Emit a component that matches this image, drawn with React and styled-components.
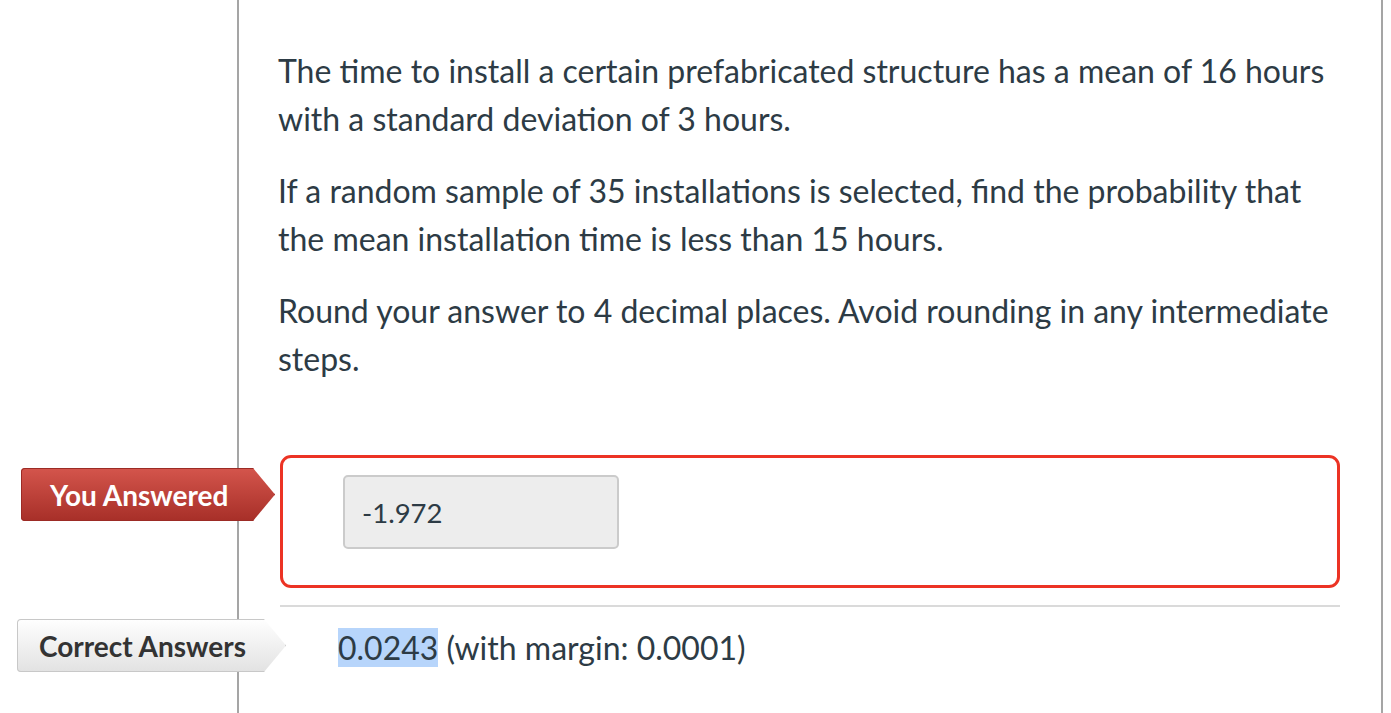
import React from "react";
import styled, { createGlobalStyle } from "styled-components";

const GlobalStyle = createGlobalStyle`
  html, body {
    margin: 0;
    padding: 0;
    background: #fff;
  }
  body {
    font-family: Lato, "Open Sans", "Liberation Sans", sans-serif;
    color: #2d3b45;
  }
`;

const Question = styled.div`
  margin-left: 237px;
  width: 1146px;
  min-height: 713px;
  border-left: 2px solid #a5a5a5;
  border-right: 2px solid #a5a5a5;
  padding: 47px 41px 0 39px;
  box-sizing: border-box;
`;

const Text = styled.div`
  font-size: 32px;
  line-height: 48px;

  p {
    margin: 0 0 24px 0;
  }
`;

const AnswerRow = styled.div`
  position: relative;
`;

const Answered = styled(AnswerRow)`
  margin: 72px 0 0 2px;
  height: 133px;
  border: 3px solid #ec3324;
  border-radius: 11px;
  box-sizing: border-box;
  padding: 17px 0 0 60px;
`;

const Label = styled.div`
  position: absolute;
  left: ${p => p.left}px;
  top: ${p => p.top}px;
  height: 53px;
  width: ${p => p.width}px;
  display: flex;
  align-items: center;
  box-sizing: border-box;
  padding-left: ${p => p.pad}px;
  font-size: 28px;
  font-weight: 700;
  border-radius: 4px 0 0 4px;
  clip-path: polygon(0 0, calc(100% - 22px) 0, 100% 50%, calc(100% - 22px) 100%, 0 100%);
  background: ${p => p.wrong
    ? "linear-gradient(#d4554c, #a72f28)"
    : "linear-gradient(#ffffff, #e2e2e2)"};
  color: ${p => p.wrong ? "#fff" : "#333"};
  box-shadow: inset 0 0 0 1px ${p => p.wrong ? "#9c2b25" : "#c8c8c8"};
`;

const InputBox = styled.div`
  width: 276px;
  height: 74px;
  background: #ededed;
  border: 2px solid #cbcbcb;
  border-radius: 5px;
  box-sizing: border-box;
  display: flex;
  align-items: center;
  padding-left: 17px;
  font-size: 27.5px;
  color: #2d3b45;
`;

const Divider = styled.div`
  height: 2px;
  background: #dadada;
  margin: 17px 0 0 2px;
`;

const Correct = styled(AnswerRow)`
  padding: 21px 0 0 60px;
  font-size: 32px;
  line-height: 40px;
`;

const Highlight = styled.span`
  background: #b7d5fb;
`;

export default function App() {
  return (
    <>
      <GlobalStyle />
      <Question>
        <Text>
          <p>
            The time to install a certain prefabricated structure has a mean of 16 hours
            with a standard deviation of 3 hours.
          </p>
          <p>
            If a random sample of 35 installations is selected, find the probability that
            the mean installation time is less than 15 hours.
          </p>
          <p>
            Round your answer to 4 decimal places. Avoid rounding in any intermediate steps.
          </p>
        </Text>
        <Answered>
          <Label wrong left={-262} top={10} width={254} pad={29}>You Answered</Label>
          <InputBox>-1.972</InputBox>
        </Answered>
        <Divider />
        <Correct>
          <Label left={-261} top={12} width={269} pad={22}>Correct Answers</Label>
          <Highlight>0.0243</Highlight> (with margin: 0.0001)
        </Correct>
      </Question>
    </>
  );
}
